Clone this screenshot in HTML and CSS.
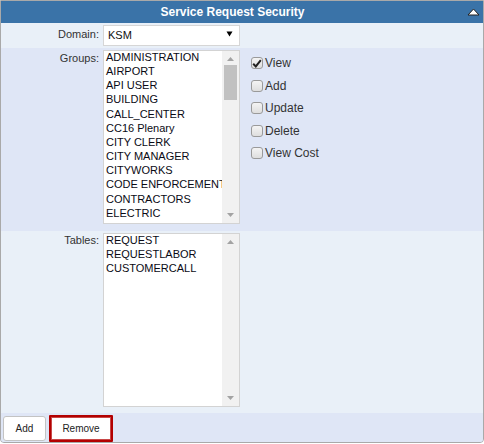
FILE: index.html
```html
<!DOCTYPE html>
<html>
<head>
<meta charset="utf-8">
<link rel="stylesheet" href="styles.css">
</head>
<body>
<div class="panel">
  <div class="header">
    <span class="title">Service Request Security</span>
    <svg class="toggle" width="13" height="8" viewBox="0 0 13 8"><polygon points="1,7 6.5,1 12,7" fill="#fff" stroke="#222" stroke-width="1"/></svg>
  </div>
  <div class="row light domain-row">
    <div class="label">Domain:</div>
    <div class="select">
      <span>KSM</span>
      <svg class="caret" width="7" height="6" viewBox="0 0 7 6"><polygon points="0.5,0.5 6.5,0.5 3.5,5.5" fill="#000"/></svg>
    </div>
  </div>
  <div class="row dark groups-row">
    <div class="label">Groups:</div>
    <div class="listbox">
      <div class="items">
        <div>ADMINISTRATION</div>
        <div>AIRPORT</div>
        <div>API USER</div>
        <div>BUILDING</div>
        <div>CALL_CENTER</div>
        <div>CC16 Plenary</div>
        <div>CITY CLERK</div>
        <div>CITY MANAGER</div>
        <div>CITYWORKS</div>
        <div>CODE ENFORCEMENT</div>
        <div>CONTRACTORS</div>
        <div>ELECTRIC</div>
        <div>ELECTRIC_MOBILE</div>
      </div>
      <div class="scrollbar">
        <svg class="arrow" width="7" height="4" viewBox="0 0 7 4"><polygon points="0,4 7,4 3.5,0" fill="#a3a3a3"/></svg>
        <div class="track"><div class="thumb"></div></div>
        <svg class="arrow" width="7" height="4" viewBox="0 0 7 4"><polygon points="0,0 7,0 3.5,4" fill="#a3a3a3"/></svg>
      </div>
    </div>
    <div class="checks">
      <label class="check"><span class="box checked"><svg width="10" height="9" viewBox="0 0 10 9"><path d="M1.2 4.8 L3.8 7.4 L8.8 1.2" fill="none" stroke="#222" stroke-width="2"/></svg></span>View</label>
      <label class="check"><span class="box"></span>Add</label>
      <label class="check"><span class="box"></span>Update</label>
      <label class="check"><span class="box"></span>Delete</label>
      <label class="check"><span class="box"></span>View Cost</label>
    </div>
  </div>
  <div class="row light tables-row">
    <div class="label">Tables:</div>
    <div class="listbox">
      <div class="items">
        <div>REQUEST</div>
        <div>REQUESTLABOR</div>
        <div>CUSTOMERCALL</div>
      </div>
      <div class="scrollbar">
        <svg class="arrow" width="7" height="4" viewBox="0 0 7 4"><polygon points="0,4 7,4 3.5,0" fill="#a3a3a3"/></svg>
        <div class="track"></div>
        <svg class="arrow" width="7" height="4" viewBox="0 0 7 4"><polygon points="0,0 7,0 3.5,4" fill="#a3a3a3"/></svg>
      </div>
    </div>
  </div>
  <div class="buttons">
    <button class="btn add">Add</button>
    <button class="btn remove">Remove</button>
  </div>
</div>
</body>
</html>
```
FILE: styles.css
```css
* { box-sizing: border-box; }
html, body { margin: 0; padding: 0; background: #fff; }
body { font-family: "Liberation Sans", Arial, sans-serif; font-size: 11px; color: #222; }

.panel {
  width: 484px;
  height: 443px;
  border: 1px solid #a9a9a9;
  border-radius: 0 0 4px 4px;
  display: flex;
  flex-direction: column;
  overflow: hidden;
  background: #dfe6f6;
}

.header {
  position: relative;
  height: 22px;
  flex: none;
  background: #3a73a8;
  color: #fff;
  font-weight: bold;
  font-size: 12px;
  line-height: 22px;
  text-align: center;
  padding-right: 19px;
}
.toggle { position: absolute; right: 3px; top: 7px; }

.row {
  display: flex;
  flex: none;
  align-items: flex-start;
}
.light { background: #e9f0f8; }
.dark { background: #dfe6f6; }

.label {
  width: 98px;
  margin-right: 4px;
  text-align: right;
  color: #333;
  line-height: 13px;
  flex: none;
}

.domain-row { height: 25px; padding-top: 2px; }
.domain-row .label { padding-top: 3px; }

.select {
  width: 137px;
  height: 21px;
  background: #fff;
  border: 1px solid #d6d6d6;
  display: flex;
  align-items: center;
  justify-content: space-between;
  padding: 0 6px 1px 4px;
  color: #111;
}
.caret { margin-bottom: 2px; }

.groups-row { height: 183px; padding-top: 2px; }
.groups-row .label { padding-top: 2px; }
.tables-row { height: 182px; padding-top: 2px; }
.tables-row .label { padding-top: 1px; }

.listbox {
  width: 137px;
  height: 174px;
  background: #fff;
  border: 1px solid #d3d3d3;
  display: flex;
  flex: none;
  overflow: hidden;
}
.items {
  flex: 1;
  overflow: hidden;
  padding-left: 2px;
  margin-top: -1px;
  line-height: 14.15px;
  color: #0a0a14;
  white-space: nowrap;
}
.scrollbar {
  width: 17px;
  flex: none;
  background: #f1f1f1;
  display: flex;
  flex-direction: column;
  align-items: center;
  padding: 6px 0 6px;
}
.arrow { flex: none; }
.track {
  flex: 1;
  width: 100%;
  padding: 4px 2px 0;
}
.thumb {
  height: 35px;
  background: #c1c1c1;
}

.checks {
  display: flex;
  flex-direction: column;
  margin-left: 11px;
  padding-top: 2px;
}
.check {
  display: flex;
  align-items: center;
  height: 22.5px;
  font-size: 12px;
  color: #333;
}
.box {
  width: 12px;
  height: 12px;
  border: 1px solid #9a9a9a;
  border-radius: 3px;
  background: linear-gradient(#f4f4f4, #dedede);
  margin-right: 2px;
  display: flex;
  align-items: center;
  justify-content: center;
}

.buttons {
  flex: 1;
  background: #dfe6f6;
  display: flex;
  align-items: flex-start;
  padding: 2px 0 0 2px;
  gap: 3px;
}
.btn {
  font-family: "Liberation Sans", Arial, sans-serif;
  font-size: 10px;
  color: #222;
  background: #fff;
  cursor: pointer;
  padding: 0;
}
.add {
  width: 43px;
  height: 25px;
  margin-top: 1px;
  border: 1px solid #c3c3c3;
  border-radius: 3px;
}
.remove {
  width: 64px;
  height: 27px;
  border: 2px solid #b30000;
  box-shadow: inset 0 0 0 1px #c84848;
  border-radius: 1px;
}
```
